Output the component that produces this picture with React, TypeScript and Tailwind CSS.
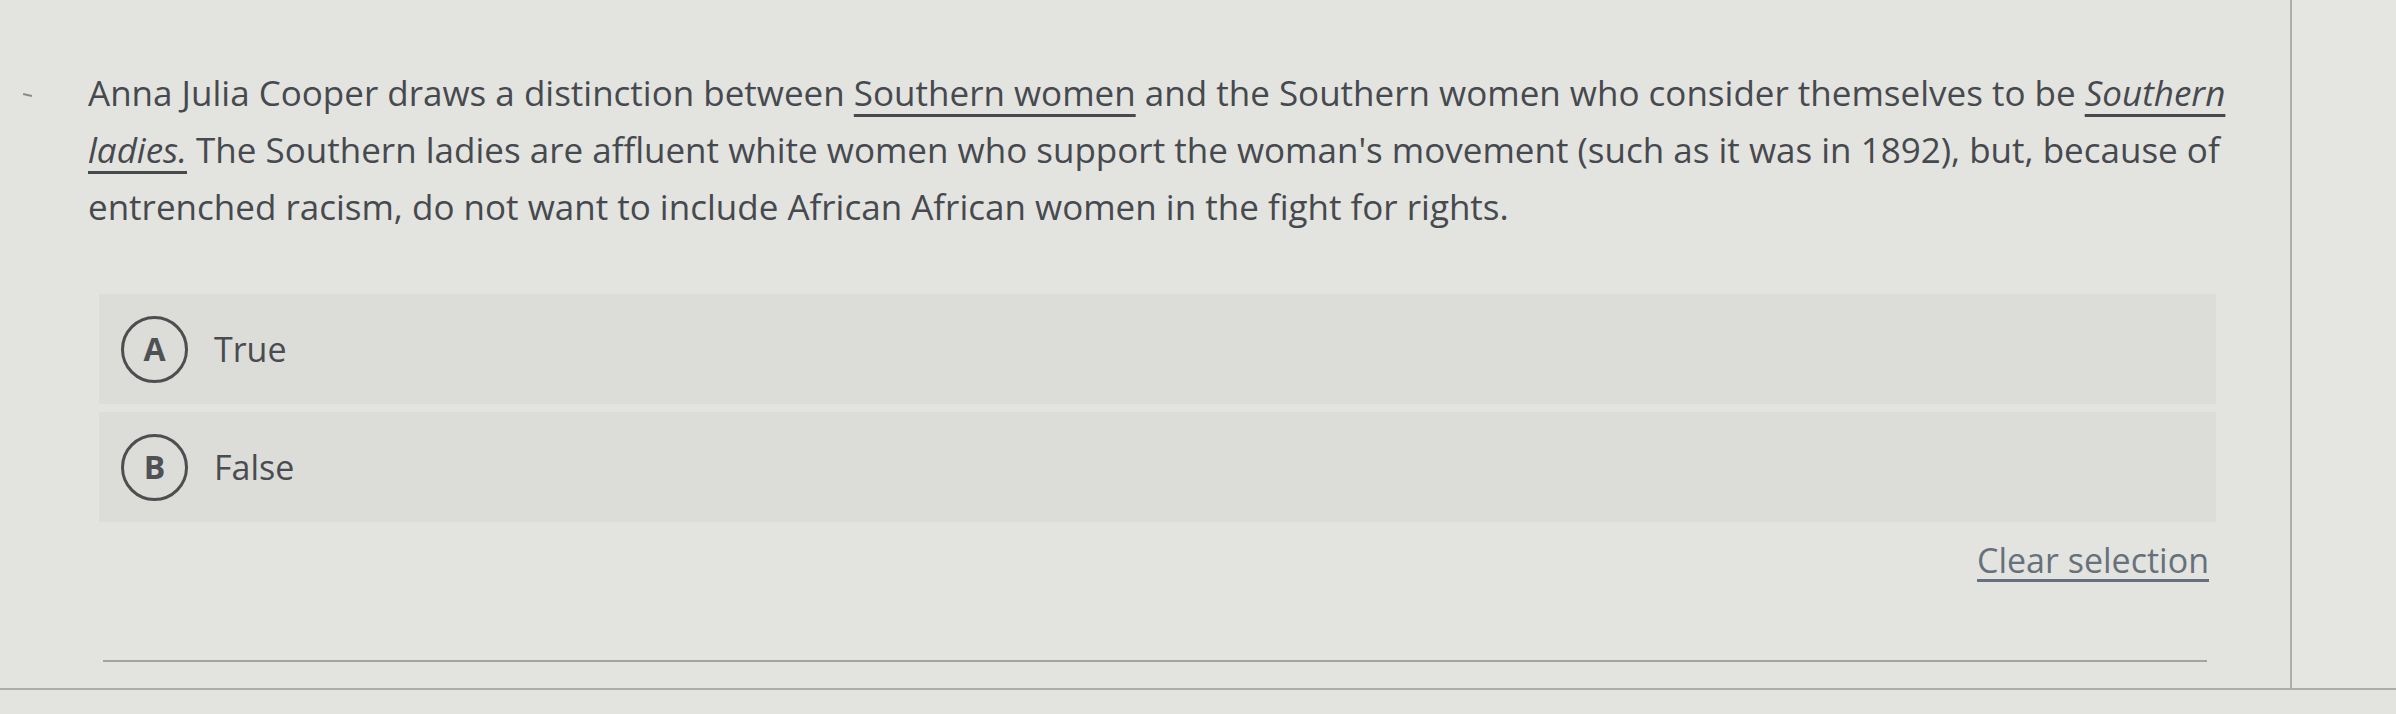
export default function App() {
  const options = [
    { letter: 'A', label: 'True' },
    { letter: 'B', label: 'False' },
  ]

  return (
    <div
      className="flex flex-col w-full h-[714px] bg-[#e3e3e0] text-[#464a4e]"
      style={{ fontFamily: '"Open Sans", "Noto Sans", sans-serif' }}
    >
      <div className="flex h-[690px] border-b-2 border-[#acaca9]">
        {/* Question column */}
        <div className="w-[2292px] shrink-0 border-r-2 border-[#acaca9] pt-[64px]">
          <div className="flex">
            <div className="w-[88px] shrink-0 pt-[30px] pl-[23px]">
              <div className="w-[9px] h-[2px] bg-[#8a8a88] rotate-12" />
            </div>
            <p className="w-[2145px] text-[35px] leading-[57px]">
              Anna Julia Cooper draws a distinction between{' '}
              <span className="underline decoration-[3px] underline-offset-[8px]">Southern women</span> and the
              Southern women who consider themselves to be{' '}
              <span className="italic underline decoration-[3px] underline-offset-[8px]">Southern ladies.</span> The
              Southern ladies are affluent white women who support the woman's movement (such as it was in 1892),
              but, because of entrenched racism, do not want to include African African women in the fight for
              rights.
            </p>
          </div>

          <div className="ml-[99px] w-[2117px] mt-[59px] flex flex-col gap-[8px]">
            {options.map((o) => (
              <div key={o.letter} className="h-[110px] bg-[#dcdcd9] flex items-center pl-[22px]">
                <div className="w-[67px] h-[67px] rounded-full border-[3px] border-[#4c4e50] flex items-center justify-center text-[32px] font-bold text-[#4f5154]">
                  {o.letter}
                </div>
                <span className="ml-[26px] text-[34px] text-[#4a4c50]">{o.label}</span>
              </div>
            ))}
          </div>

          <div className="w-[2209px] mt-[15px] flex justify-end">
            <span className="text-[34px] leading-[46px] text-[#66717c] underline decoration-[3px] underline-offset-[6px]">
              Clear selection
            </span>
          </div>

          <div className="ml-[103px] w-[2104px] mt-[77px] h-[2px] bg-[#a3a3a1]" />
        </div>

        {/* Right rail */}
        <div className="flex-1 bg-[#e5e5e2]" />
      </div>
    </div>
  )
}
